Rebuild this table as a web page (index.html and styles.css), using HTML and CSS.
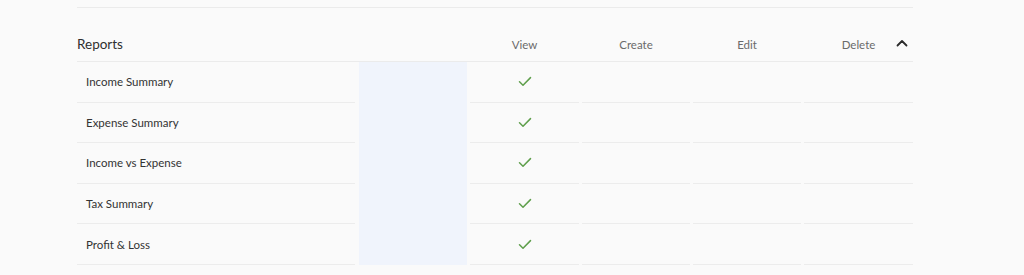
FILE: index.html
```html
<!DOCTYPE html>
<html>
<head>
<meta charset="utf-8">
<link rel="stylesheet" href="styles.css">
</head>
<body>
<div class="panel">
  <div class="divider"></div>
  <div class="section">
    <div class="grid head">
      <div class="title">Reports</div>
      <div></div>
      <div class="col">View</div>
      <div class="col">Create</div>
      <div class="col">Edit</div>
      <div class="col">Delete</div>
      <svg class="chev" width="12" height="8" viewBox="0 0 12 8"><path d="M1.5 6.5 L6 2 L10.5 6.5" fill="none" stroke="#2b2b2b" stroke-width="1.8" stroke-linecap="round" stroke-linejoin="round"/></svg>
    </div>
    <div class="grid body">
      <div class="blue"></div>
      <div class="name">Income Summary</div>
      <div class="cell"><svg class="check" width="14" height="11" viewBox="0 0 14 11"><path d="M1.5 5.8 L5 9.2 L12.5 1.6" fill="none" stroke="#5f9f4c" stroke-width="1.5" stroke-linecap="round" stroke-linejoin="round"/></svg></div>
      <div class="cell"></div><div class="cell"></div><div class="cell"></div>

      <div class="name">Expense Summary</div>
      <div class="cell"><svg class="check" width="14" height="11" viewBox="0 0 14 11"><path d="M1.5 5.8 L5 9.2 L12.5 1.6" fill="none" stroke="#5f9f4c" stroke-width="1.5" stroke-linecap="round" stroke-linejoin="round"/></svg></div>
      <div class="cell"></div><div class="cell"></div><div class="cell"></div>

      <div class="name">Income vs Expense</div>
      <div class="cell"><svg class="check" width="14" height="11" viewBox="0 0 14 11"><path d="M1.5 5.8 L5 9.2 L12.5 1.6" fill="none" stroke="#5f9f4c" stroke-width="1.5" stroke-linecap="round" stroke-linejoin="round"/></svg></div>
      <div class="cell"></div><div class="cell"></div><div class="cell"></div>

      <div class="name">Tax Summary</div>
      <div class="cell"><svg class="check" width="14" height="11" viewBox="0 0 14 11"><path d="M1.5 5.8 L5 9.2 L12.5 1.6" fill="none" stroke="#5f9f4c" stroke-width="1.5" stroke-linecap="round" stroke-linejoin="round"/></svg></div>
      <div class="cell"></div><div class="cell"></div><div class="cell"></div>

      <div class="name">Profit &amp; Loss</div>
      <div class="cell"><svg class="check" width="14" height="11" viewBox="0 0 14 11"><path d="M1.5 5.8 L5 9.2 L12.5 1.6" fill="none" stroke="#5f9f4c" stroke-width="1.5" stroke-linecap="round" stroke-linejoin="round"/></svg></div>
      <div class="cell"></div><div class="cell"></div><div class="cell"></div>
    </div>
  </div>
</div>
</body>
</html>
```

FILE: styles.css
```css
html, body {
  margin: 0;
  padding: 0;
  background: #fafafa;
}
body {
  font-family: Lato, "Noto Sans", sans-serif;
  color: #333;
  height: 275px;
  overflow: hidden;
}
.panel {
  width: 836px;
  margin-left: 77px;
  padding-top: 7px;
}
.divider {
  height: 1px;
  background: #ebebeb;
}
.grid {
  display: grid;
  grid-template-columns: 279px 108px 109px 108px 108px 109px;
  column-gap: 3px;
}
.head {
  position: relative;
  height: 34px;
  padding-top: 19px;
  align-items: center;
  border-bottom: 1px solid #ebebeb;
}
.head .title {
  font-size: 13.5px;
  color: #2f2f2f;
}
.head .col {
  text-align: center;
  font-size: 11.5px;
  color: #6a6a6a;
}
.chev {
  position: absolute;
  right: 5px;
  top: 31px;
}
.body {
  grid-auto-rows: 40.6px;
}
.blue {
  grid-column: 2;
  grid-row: 1 / span 5;
  background: #f0f4fc;
}
.name {
  grid-column: 1;
  display: flex;
  align-items: center;
  padding-left: 9px;
  font-size: 11.5px;
  color: #333;
  border-bottom: 1.5px solid #ececec;
  margin-right: 1px;
}
.cell {
  display: flex;
  align-items: center;
  justify-content: center;
  border-bottom: 1.5px solid #ececec;
}
.name + .cell {
  grid-column: 3;
}
.check {
  display: block;
}
```
